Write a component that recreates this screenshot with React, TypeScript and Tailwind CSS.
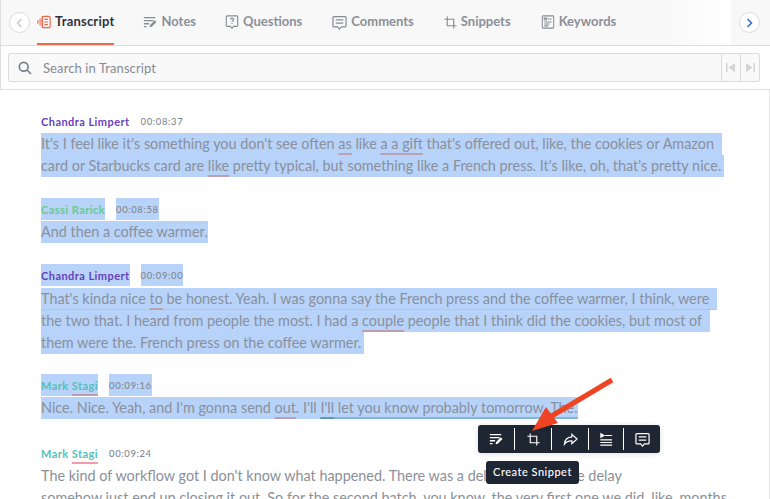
import React from "react";

const S = ({ c = "currentColor", w = 14, h = 14, children, v = "0 0 16 16", sw = 1.3 }: any) => (
  <svg width={w} height={h} viewBox={v} fill="none" stroke={c} strokeWidth={sw} className="shrink-0">
    {children}
  </svg>
);

const TranscriptIcon = () => (
  <S c="#f2664a" w={14} h={14} sw={1.300}>
    <path d="M1 6v4M3.500 4v8" />
    <rect x="6" y="1.500" width="9" height="13" rx="1.500" />
    <path d="M6 1.500v13M8.500 5h4M8.500 8h4M8.500 11h4" />
  </S>
);
const NotesIcon = ({ c = "#878c94", w = 14 }: { c?: string; w?: number }) => (
  <S c={c} sw={1.500} w={w} h={w}>
    <path d="M1 3h13M1 6.500h11M1 10h6M1 13.200h3" />
    <path d="M7.500 14l.6-2.600 5.400-5.400 1.900 1.900-5.400 5.400z" fill={c} stroke="none" />
  </S>
);
const QuestionIcon = () => (
  <svg width="14" height="14" viewBox="0 0 16 16" fill="none" stroke="#878c94" strokeWidth="1.300" className="shrink-0">
    <path d="M2.500 1h11a1 1 0 0 1 1 1v10a1 1 0 0 1-1 1h-3.700L8 15l-1.800-2H2.500a1 1 0 0 1-1-1V2a1 1 0 0 1 1-1z" />
    <path d="M6.200 5.200c.1-1.100.9-1.600 1.800-1.600 1 0 1.800.6 1.800 1.500 0 1.400-1.800 1.400-1.800 2.800M8 9.100v1.300" />
  </svg>
);
const CommentIcon = ({ c = "#878c94", w = 15 }: { c?: string; w?: number }) => (
  <S c={c} sw={1.300} w={w} h={w}>
    <path d="M2 1.700h12a1 1 0 0 1 1 1v9a1 1 0 0 1-1 1h-4L8 15l-2-2.300H2a1 1 0 0 1-1-1v-9a1 1 0 0 1 1-1z" />
    <path d="M4 5.200h8M4 8.600h8" />
  </S>
);
const CropIcon = ({ c = "#878c94", w = 13 }: { c?: string; w?: number }) => (
  <S c={c} sw={1.400} w={w} h={w}>
    <path d="M4 .5V12h11.500M.5 4H12v11.500" />
  </S>
);
const KeywordIcon = () => (
  <S c="#878c94" sw={1.200}>
    <rect x="1.500" y="1" width="13" height="14" rx="1" />
    <rect x="3.800" y="3.400" width="2.400" height="2.200" />
    <path d="M7.500 4.500h4.500M3.800 8h8.200M3.800 10.200h6M3.800 12.400h4.500" />
  </S>
);
const ShareIcon = () => (
  <S c="#ffffff" sw={1.300} w={15} h={15}>
    <path d="M9.500 2.500L15 7.500l-5.500 5v-3c-3.500-.2-6 .8-8 3.500.3-4.300 3-7.300 8-7.700z" />
  </S>
);
const ListPlayIcon = () => (
  <svg width="14" height="14" viewBox="0 0 16 16" className="shrink-0">
    <path d="M1.500 .8l5.500 3.200-5.500 3.200z" fill="#fff" />
    <path d="M7 4h8M1.500 9h13.500M1.500 12h13.500M1.500 15h13.500" stroke="#fff" strokeWidth="1.300" fill="none" />
  </svg>
);

const Tab = ({ icon, label, active, w }: { icon: React.ReactNode; label: string; active?: boolean; w?: string }) => (
  <div
    className={`flex h-[45px] items-center gap-[4px] border-b-2 pt-px text-[13px] font-bold ${w ?? ""} ${
      active ? "border-[#f2664a] tracking-[0.2px] text-[#30353d]" : "border-transparent text-[#8b9098]"
    }`}
  >
    {icon}
    <span>{label}</span>
  </div>
);

const U = ({ children, c = "decoration-[#bd9fb4]" }: { children: React.ReactNode; c?: string }) => (
  <span className={`underline decoration-2 underline-offset-[4px] ${c}`}>{children}</span>
);

const Head = ({
  name,
  time,
  color,
  sel,
  mb = "mb-px",
}: {
  name: React.ReactNode;
  time: string;
  color: string;
  sel?: boolean;
  mb?: string;
}) => (
  <div className={`flex h-[22px] items-center gap-[11px] leading-[24px] ${mb}`}>
    <span className={`h-[22px] text-[11px] font-bold tracking-[0.45px] ${color} ${sel ? "bg-[#b7d3f9]" : ""}`}>{name}</span>
    <span className={`h-[22px] text-[9.500px] font-medium tracking-[0.6px] text-[#84888f] ${sel ? "bg-[#b7d3f9]" : ""}`}>{time}</span>
  </div>
);

const L = ({ children, className = "" }: { children: React.ReactNode; className?: string }) => (
  <div className={`h-[22px] w-fit whitespace-nowrap bg-[#b7d3f9] text-[#8a909c] ${className}`}>{children}</div>
);

export default function App() {
  return (
    <div
      className="relative h-[499px] w-[770px] overflow-hidden bg-white"
      style={{ fontFamily: "Lato, 'Open Sans', sans-serif" }}
    >
      <div className="relative flex h-[46px] items-start border-b border-l border-[#dedede] bg-[#f8f8f8]">
        <div className="absolute right-[39px] top-0 h-[45px] w-[70px] bg-gradient-to-r from-[#f8f8f8] to-white" />
        <div className="ml-[8px] mt-[12px] flex h-[21px] w-[21px] shrink-0 items-center justify-center rounded-full border border-[#dcdcdc] bg-white">
          <svg width="7" height="10" viewBox="0 0 7 10" fill="none" stroke="#c4c7cc" strokeWidth="1.400">
            <path d="M5.500 1L1.500 5l4 4" />
          </svg>
        </div>
        <div className="relative ml-[7px] flex">
          <Tab active icon={<TranscriptIcon />} label="Transcript" w="mr-[29px]" />
          <Tab icon={<NotesIcon />} label="Notes" w="mr-[29px]" />
          <Tab icon={<QuestionIcon />} label="Questions" w="mr-[30px]" />
          <Tab icon={<CommentIcon />} label="Comments" w="mr-[30px]" />
          <Tab icon={<CropIcon />} label="Snippets" w="mr-[30px]" />
          <Tab icon={<KeywordIcon />} label="Keywords" />
        </div>
        <div className="relative ml-auto mr-[10px] mt-[12px] flex h-[21px] w-[21px] shrink-0 items-center justify-center rounded-full border border-[#dcdcdc] bg-white">
          <svg width="7" height="10" viewBox="0 0 7 10" fill="none" stroke="#2f6fd0" strokeWidth="1.600">
            <path d="M1.500 1l4 4-4 4" />
          </svg>
        </div>
      </div>

      <div className="h-[44px] border-b border-l border-[#dedede] px-[7px] pt-[7px]">
        <div className="flex h-[29px] w-[752px] items-center rounded-[2px] border border-[#dcdcdc] bg-[#f9f9f9]">
          <svg width="14" height="14" viewBox="0 0 14 14" fill="none" stroke="#7c828b" strokeWidth="1.700" className="ml-[9px]">
            <circle cx="5.700" cy="5.700" r="4.400" />
            <path d="M9 9l4 4" />
          </svg>
          <span className="ml-[11px] pt-[2px] text-[13px] tracking-[0.1px] text-[#868b94]">Search in Transcript</span>
          <div className="ml-auto flex h-full">
            <div className="flex w-[19px] items-center justify-center border-l border-[#dcdcdc]">
              <svg width="10" height="9" viewBox="0 0 10 9" fill="#d2d3d5">
                <path d="M0 0h1.500v9H0zM9 0v9L2.500 4.500z" />
              </svg>
            </div>
            <div className="flex w-[19px] items-center justify-center border-l border-[#dcdcdc]">
              <svg width="10" height="9" viewBox="0 0 10 9" fill="#d2d3d5">
                <path d="M1 0v9l6.500-4.500zM8.500 0H10v9H8.500z" />
              </svg>
            </div>
          </div>
        </div>
      </div>

      <div className="h-[409px] overflow-hidden border-r border-l border-r-[#e6e6e6] border-l-transparent pl-[40px] pt-[20px] text-[14.400px] leading-[22px]">
        <Head name="Chandra Limpert" time="00:08:37" color="text-[#6a3fbd]" />
        <L className="pr-[8px]">
          It's I feel like it's something you don't see often <U>as</U> like <U>a a gift</U> that's offered out, like, the cookies or Amazon
        </L>
        <L className="pr-[3px]">
          card or Starbucks card are <U>like</U> pretty typical, but something like a French press. It's like, oh, that's pretty nice.
        </L>

        <div className="h-[21px]" />
        <Head name="Cassi Rarick" time="00:08:58" color="text-[#65cb8e]" sel />
        <L>And then a coffee warmer.</L>

        <div className="h-[21px]" />
        <Head name="Chandra Limpert" time="00:09:00" color="text-[#6a3fbd]" sel mb="mb-[2px]" />
        <L className="pr-[8px] shadow-[inset_0_-1px_0_#a8c8f4]">
          That's kinda nice <U>to</U> be honest. Yeah. I was gonna say the French press and the coffee warmer, I think, were
        </L>
        <L className="pr-[8px]">
          the two that. I heard from people the most. I had a <U>couple</U> people that I think did the cookies, but most of
        </L>
        <L className="pr-[3px]">them were the. French press on the coffee warmer.</L>

        <div className="h-[20px]" />
        <Head name={<>Mark <U>Stagi</U></>} time="00:09:16" color="text-[#55bfba]" sel />
        <L>
          Nice. Nice. Yeah, and I'm gonna send <U>out</U>. I'll{" "}
          <span className="underline decoration-2 decoration-[#7db8d4] underline-offset-[4px]">
            <U c="decoration-[#5f9aa5]">I'll</U> let you know probably tomorrow. The.
          </span>
        </L>

        <div className="h-[23px]" />
        <Head name={<>Mark <U c="decoration-[#f09cae]">Stagi</U></>} time="00:09:24" color="text-[#55bfba]" />
        <div className="whitespace-nowrap text-[#8b9098]">
          The kind of workflow got I don't know what happened. There was a delay and then the delay
        </div>
        <div className="whitespace-nowrap text-[#8b9098]">
          somehow just end up closing it out. So for the second batch, you know, the very first one we did, like, months
        </div>
      </div>

      <div className="absolute left-[478px] top-[425px] flex h-[28px] w-[182px] items-center rounded-[3px] bg-[#1e2533] shadow-[0_1px_6px_rgba(0,0,0,0.12)]">
        <div className="flex h-[22px] w-[37px] items-center justify-center border-r border-white"><NotesIcon c="#ffffff" /></div>
        <div className="flex h-[22px] w-[37px] items-center justify-center border-r border-white"><CropIcon c="#ffffff" /></div>
        <div className="flex h-[22px] w-[37px] items-center justify-center border-r border-white"><ShareIcon /></div>
        <div className="flex h-[22px] w-[35px] items-center justify-center border-r border-white"><ListPlayIcon /></div>
        <div className="flex h-[22px] flex-1 items-center justify-center"><CommentIcon c="#ffffff" /></div>
      </div>

      <div className="absolute left-[486px] top-[461px] flex h-[23px] w-[93px] items-center justify-center rounded-[3px] bg-[#1e2533] text-[11px] font-medium tracking-[0.5px] text-white">
        Create Snippet
      </div>

      <svg className="absolute left-[525px] top-[370px]" width="95" height="70" viewBox="0 0 95 70" fill="none">
        <path d="M87 10L25 47" stroke="#ee4423" strokeWidth="5" strokeLinecap="butt" />
        <path d="M7 61L21 37 33 53z" fill="#ee4423" />
      </svg>
    </div>
  );
}
